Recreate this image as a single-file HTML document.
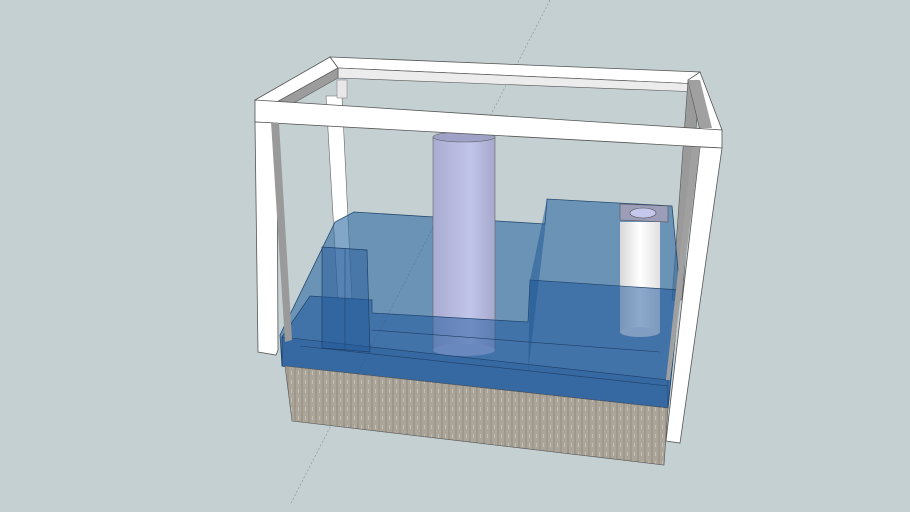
<!DOCTYPE html>
<html><head><style>
html,body{margin:0;padding:0;width:910px;height:512px;overflow:hidden;background:#c5d0d2}
</style></head><body>
<svg width="910" height="512" viewBox="0 0 910 512" xmlns="http://www.w3.org/2000/svg">
<defs>
<pattern id="sand" width="7" height="9" patternUnits="userSpaceOnUse">
<rect width="7" height="9" fill="#aba599"/>
<rect x="0" width="2" height="9" fill="#9d978c"/>
<rect x="4" y="2" width="1" height="4" fill="#c3beb3"/>
</pattern>
<linearGradient id="cyl" x1="0" x2="1">
<stop offset="0" stop-color="#a9acd0"/><stop offset="0.6" stop-color="#c2c5ea"/><stop offset="1" stop-color="#a6a9cc"/>
</linearGradient>
<linearGradient id="wcyl" x1="0" x2="1">
<stop offset="0" stop-color="#d8d8d8"/><stop offset="0.5" stop-color="#ffffff"/><stop offset="1" stop-color="#e0e0e0"/>
</linearGradient>
</defs>
<line x1="550" y1="0" x2="290" y2="505" stroke="#8d979a" stroke-width="0.7" stroke-dasharray="2,2"/>
<polygon points="330,57 700,72 700,84 338,68" fill="#fff" stroke="#555" stroke-width="0.8"/>
<polygon points="338,68 700,84 700,92 338,78" fill="#ececec" stroke="#555" stroke-width="0.6"/>
<polygon points="688,80 700,80 682,300 672,300" fill="#9a9a9a" stroke="#555" stroke-width="0.6"/>
<polygon points="326,96 342,96 352,300 338,300" fill="#fff" stroke="#666" stroke-width="0.6"/>
<rect x="337" y="80" width="10" height="18" fill="#e8e8e8" stroke="#777" stroke-width="0.5"/>
<polygon points="255,100 330,57 338,68 275,103" fill="#fff" stroke="#555" stroke-width="0.8"/>
<polygon points="275,103 338,68 338,78 292,104" fill="#9c9c9c" stroke="#555" stroke-width="0.6"/>
<polygon points="700,72 722,130 700,130 688,80" fill="#fff" stroke="#555" stroke-width="0.8"/>
<polygon points="688,80 700,80 712,128 700,128" fill="#a0a0a0"/>
<polygon points="354,212 545,224 547,199 672,206 680,290 668,408 282,366 280,335 335,222" fill="#2f6aa3" fill-opacity="0.6" stroke="#244a70" stroke-width="0.8"/>
<rect x="620" y="222" width="40" height="110" fill="url(#wcyl)"/>
<ellipse cx="640" cy="332" rx="20" ry="5" fill="#e8e8e8"/>
<polygon points="620,204 668,206 668,222 620,220" fill="#9c9db8" stroke="#555" stroke-width="0.6"/>
<ellipse cx="643" cy="213" rx="13" ry="5" fill="#c5c8ec" stroke="#555" stroke-width="0.6"/>
<rect x="433" y="137" width="62" height="213" fill="url(#cyl)" stroke="#666" stroke-width="0.6"/>
<ellipse cx="464" cy="350" rx="31" ry="6" fill="#b9bce2"/>
<ellipse cx="464" cy="137" rx="31" ry="5" fill="#9fa2c6" stroke="#666" stroke-width="0.6"/>
<polygon points="282,337 310,296 372,300 372,313 528,322 530,280 680,290 668,408 282,366" fill="#1a539a" fill-opacity="0.5" stroke="#21456e" stroke-width="0.7"/>
<polygon points="282,337 668,380 668,408 282,366" fill="#1f5494" fill-opacity="0.35" stroke="#1e3f68" stroke-width="0.6"/>
<polygon points="322,247 367,250 370,352 322,348" fill="#1f5796" fill-opacity="0.45" stroke="#1f3f66" stroke-width="0.7"/>
<line x1="345" y1="248" x2="345" y2="350" stroke="#1f3f66" stroke-width="0.5"/>
<polygon points="547,199 530,280 528,372 545,230" fill="#1d5590" fill-opacity="0.5"/>
<line x1="300" y1="346" x2="668" y2="386" stroke="#1f3f66" stroke-width="0.6"/>
<line x1="372" y1="330" x2="660" y2="352" stroke="#1f3f66" stroke-width="0.6"/>
<polygon points="285,366 668,408 664,465 292,421" fill="url(#sand)" stroke="#555" stroke-width="0.6"/>
<polygon points="255,100 722,130 722,148 255,122" fill="#fff" stroke="#555" stroke-width="0.8"/>
<polygon points="255,122 277,123 278,350 276,355 258,352" fill="#fff" stroke="#555" stroke-width="0.8"/>
<polygon points="271,122 279,123 292,340 285,342" fill="#9a9a9a"/>
<polygon points="700,147 722,148 680,443 666,441" fill="#fff" stroke="#555" stroke-width="0.8"/>
<polygon points="692,147 700,147 670,380 666,380" fill="#a0a0a0"/>
</svg>
</body></html>
